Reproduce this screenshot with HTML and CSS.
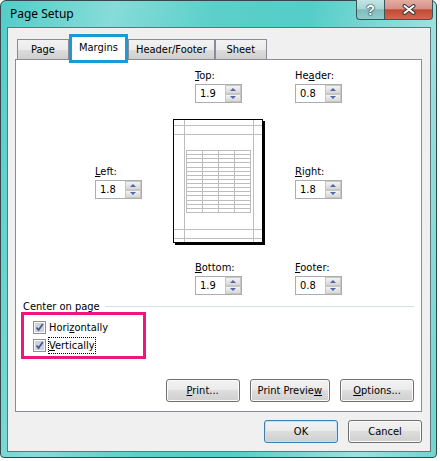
FILE: index.html
```html
<!DOCTYPE html>
<html lang="en">
<head>
  <meta charset="UTF-8" />
  <meta name="viewport" content="width=device-width, initial-scale=1.0"/>
  <title>Page Setup</title>
  <link rel="stylesheet" href="styles.css">
</head>
<body>

  <div class="window">
    <div class="titlebar">
      <span class="title">Page Setup</span>
      <div class="caption-btns">
        <span class="cap-btn help">?</span>
        <span class="cap-btn close">
          <svg width="14" height="11" viewBox="0 0 14 11">
            <path d="M2.5 2 L11.5 9 M11.5 2 L2.5 9" stroke="#2f3a3c" stroke-width="4" stroke-linecap="round"/>
            <path d="M2.5 2 L11.5 9 M11.5 2 L2.5 9" stroke="#fff" stroke-width="2" stroke-linecap="round"/>
          </svg>
        </span>
      </div>
    </div>

    <div class="client">
      <div class="tabctl">
        <div class="tabs">
          <span class="tab">Page</span>
          <span class="tab active">Margins</span>
          <span class="tab">Header/Footer</span>
          <span class="tab">Sheet</span>
        </div>

        <div class="panel">
          <div class="margins">
            <div class="field f-top">
              <label><u>T</u>op:</label>
              <div class="spin"><span class="spin-value">1.9</span><span class="spin-btns"><span class="up"></span><span class="down"></span></span></div>
            </div>
            <div class="field f-header">
              <label>He<u>a</u>der:</label>
              <div class="spin"><span class="spin-value">0.8</span><span class="spin-btns"><span class="up"></span><span class="down"></span></span></div>
            </div>
            <div class="field f-left">
              <label><u>L</u>eft:</label>
              <div class="spin"><span class="spin-value">1.8</span><span class="spin-btns"><span class="up"></span><span class="down"></span></span></div>
            </div>

            <!-- page thumbnail: margin guides and a small table -->
            <svg class="preview" width="92" height="126" viewBox="0 0 92 126">
              <rect x="2" y="2" width="90" height="124" fill="#000"/>
              <rect x="0.5" y="0.5" width="89" height="123" fill="#fff" stroke="#000"/>
              <g stroke="#bdbdbd" stroke-width="1">
                <path d="M11.5 1 V123 M80.5 1 V123 M1 6.5 H89 M1 15.5 H89 M1 110.5 H89 M1 119.5 H89"/>
                <rect x="13.5" y="31.5" width="64" height="62" fill="none"/>
                <path d="M29.5 31.5 V93.5 M45.5 31.5 V93.5 M61.5 31.5 V93.5"/>
                <path d="M13.5 35.5 H77.5 M13.5 39.5 H77.5 M13.5 43.5 H77.5 M13.5 48.5 H77.5 M13.5 52.5 H77.5 M13.5 56.5 H77.5 M13.5 60.5 H77.5 M13.5 64.5 H77.5 M13.5 68.5 H77.5 M13.5 72.5 H77.5 M13.5 76.5 H77.5 M13.5 81.5 H77.5 M13.5 85.5 H77.5 M13.5 89.5 H77.5"/>
              </g>
            </svg>

            <div class="field f-right">
              <label><u>R</u>ight:</label>
              <div class="spin"><span class="spin-value">1.8</span><span class="spin-btns"><span class="up"></span><span class="down"></span></span></div>
            </div>
            <div class="field f-bottom">
              <label><u>B</u>ottom:</label>
              <div class="spin"><span class="spin-value">1.9</span><span class="spin-btns"><span class="up"></span><span class="down"></span></span></div>
            </div>
            <div class="field f-footer">
              <label><u>F</u>ooter:</label>
              <div class="spin"><span class="spin-value">0.8</span><span class="spin-btns"><span class="up"></span><span class="down"></span></span></div>
            </div>
          </div>

          <div class="group">
            <div class="group-head">Center on page</div>
            <div class="checks">
              <div class="check-row">
                <svg class="checkbox" width="13" height="13" viewBox="0 0 13 13">
                  <rect x="0.5" y="0.5" width="12" height="12" fill="#f6f6f6" stroke="#8e8f8f"/>
                  <rect x="2" y="2" width="9" height="9" fill="#cfd2d6"/>
                  <path d="M3.5 6.5 L5.5 9 L9.8 3" fill="none" stroke="#3f5899" stroke-width="1.7"/>
                </svg>
                <span class="check-label">Hori<u>z</u>ontally</span>
              </div>
              <div class="check-row">
                <svg class="checkbox" width="13" height="13" viewBox="0 0 13 13">
                  <rect x="0.5" y="0.5" width="12" height="12" fill="#f6f6f6" stroke="#8e8f8f"/>
                  <rect x="2" y="2" width="9" height="9" fill="#cfd2d6"/>
                  <path d="M3.5 6.5 L5.5 9 L9.8 3" fill="none" stroke="#3f5899" stroke-width="1.7"/>
                </svg>
                <span class="check-label focused"><u>V</u>ertically</span>
              </div>
            </div>
          </div>

          <div class="panel-actions">
            <button class="btn"><u>P</u>rint...</button>
            <button class="btn">Print Previe<u>w</u></button>
            <button class="btn"><u>O</u>ptions...</button>
          </div>
        </div>
      </div>

      <div class="dialog-actions">
        <button class="btn default">OK</button>
        <button class="btn">Cancel</button>
      </div>
    </div>
  </div>

</body>
</html>
```

FILE: styles.css
```css
body {
  margin: 0;
  background: #ffffff;
  font-family: "DejaVu Sans Condensed", "DejaVu Sans", sans-serif;
  font-stretch: condensed;
  font-size: 11px;
  color: #000;
}

u {
  text-decoration: underline;
  text-underline-offset: 1px;
}

/* window frame */
.window {
  width: 437px;
  height: 458px;
  box-sizing: border-box;
  border: 1px solid #34494c;
  border-radius: 6px 6px 4px 4px;
  padding: 0 5px 5px 6px;
  display: flex;
  flex-direction: column;
  background: linear-gradient(100deg, #52cdc8 0%, #86dcd8 22%, #5ccfca 42%, #55cdc8 60%, #9be2df 85%, #6fd5d0 100%);
}

.titlebar {
  height: 26px;
  display: flex;
  align-items: center;
}

.title {
  flex: 1;
  margin-left: 3px;
  font-family: "Noto Sans", sans-serif;
  font-stretch: normal;
  font-size: 12px;
  line-height: 16px;
}

.caption-btns {
  align-self: flex-start;
  display: flex;
  margin-top: -1px;
  margin-right: -2px;
}

.cap-btn {
  height: 20px;
  box-sizing: border-box;
  border: 1px solid #3a5658;
  border-top: none;
  display: flex;
  align-items: center;
  justify-content: center;
}

.help {
  width: 28px;
  border-right: none;
  border-radius: 0 0 0 4px;
  background: linear-gradient(#c4e5e5 0%, #a9d6d6 45%, #80bcbc 52%, #94cccc 100%);
  font-family: "Liberation Sans", sans-serif;
  font-weight: bold;
  font-size: 14px;
  color: #fff;
  text-shadow: 0 0 1px #2d3c3e, 0 0 1px #2d3c3e, 0 0 2px #2d3c3e;
}

.close {
  width: 49px;
  border-radius: 0 0 4px 0;
  background: linear-gradient(#e4aca2 0%, #d6928a 45%, #c24a31 52%, #d2694c 100%);
}

.client {
  flex: 1;
  background: #f0f0f0;
  border: 1px solid #5f7779;
  padding-top: 8px;
  display: flex;
  flex-direction: column;
}

/* tab control */
.tabctl {
  margin: 0 8px 0 7px;
}

.tabs {
  display: flex;
  align-items: flex-end;
  height: 23px;
  padding-left: 2px;
}

.tab {
  height: 20px;
  min-width: 52px;
  box-sizing: border-box;
  padding: 0 7px;
  border: 1px solid #898c95;
  border-bottom: none;
  text-align: center;
  line-height: 19px;
  background: linear-gradient(#f2f2f2, #ebebeb 50%, #dddddd 51%, #cfcfcf);
}

.tab.active {
  position: relative;
  z-index: 1;
  height: 24px;
  min-width: 57px;
  margin-bottom: -1px;
  padding: 0 9px;
  line-height: 21px;
  background: #fff;
}

.tab.active::after {
  content: "";
  position: absolute;
  left: -1px;
  right: -1px;
  top: -3px;
  bottom: -3px;
  border: 3px solid #1b9ad8;
}

.panel {
  background: #fff;
  border: 1px solid #898c95;
  padding: 9px 7px 9px 5px;
}

/* margin fields around the page thumbnail */
.margins {
  display: grid;
  grid-template-columns: 78px 92px 30px 60px;
  grid-template-rows: auto 126px auto;
  row-gap: 16px;
  margin-left: 74px;
}

.field label {
  display: block;
  line-height: 13px;
  margin-bottom: 2px;
}

.f-top { grid-column: 2; grid-row: 1; margin-left: 22px; }
.f-header { grid-column: 4; grid-row: 1; }
.f-left { grid-column: 1; grid-row: 2; align-self: center; }
.preview { grid-column: 2; grid-row: 2; display: block; }
.f-right { grid-column: 4; grid-row: 2; align-self: center; }
.f-bottom { grid-column: 2; grid-row: 3; margin-left: 22px; }
.f-footer { grid-column: 4; grid-row: 3; }

.spin {
  width: 47px;
  height: 19px;
  box-sizing: border-box;
  border: 1px solid #abadb3;
  background: #fff;
  display: flex;
}

.spin-value {
  flex: 1;
  padding-left: 4px;
  line-height: 17px;
}

.spin-btns {
  width: 16px;
  display: flex;
  flex-direction: column;
}

.spin-btns span {
  flex: 1;
  box-sizing: border-box;
  border: 1px solid #c6c6c6;
  background: linear-gradient(#f4f4f4, #e4e4e4 50%, #d8d8d8);
  display: flex;
  align-items: center;
  justify-content: center;
}

.spin-btns .up::after,
.spin-btns .down::after {
  content: "";
  border-left: 3px solid transparent;
  border-right: 3px solid transparent;
}

.spin-btns .up::after {
  border-bottom: 3px solid #4e66aa;
}

.spin-btns .down::after {
  border-top: 3px solid #4e66aa;
}

/* center on page group */
.group {
  margin-top: 5px;
}

.group-head {
  display: flex;
  align-items: center;
  margin-left: 2px;
  line-height: 13px;
}

.group-head::after {
  content: "";
  flex: 1;
  margin-left: 5px;
  border-top: 1px solid #d5dfe5;
}

.checks {
  width: 125px;
  box-sizing: border-box;
  margin-top: -1px;
  padding: 3px 0 2px 9px;
  border: 3px solid #f0147f;
}

.check-row {
  display: flex;
  align-items: center;
  height: 18px;
}

.checkbox {
  margin-right: 2px;
}

.check-label {
  border: 1px dotted transparent;
  line-height: 15px;
}

.check-label.focused {
  border-color: #000;
}

/* buttons */
.btn {
  height: 23px;
  min-width: 74px;
  box-sizing: border-box;
  padding: 0 7px;
  border: 1px solid #707070;
  border-radius: 3px;
  background: linear-gradient(#f2f2f2 0%, #ebebeb 45%, #dddddd 50%, #cfcfcf 100%);
  box-shadow: inset 0 0 0 1px #fbfbfb;
  font: inherit;
  color: #000;
  line-height: 21px;
}

.btn.default {
  border-color: #3c7fb1;
  box-shadow: inset 0 0 0 1px #bfe4f7;
}

.panel-actions {
  display: flex;
  justify-content: flex-end;
  gap: 10px;
  margin-top: 20px;
}

.dialog-actions {
  display: flex;
  justify-content: flex-end;
  gap: 10px;
  margin: 8px 8px 0 0;
}
```
